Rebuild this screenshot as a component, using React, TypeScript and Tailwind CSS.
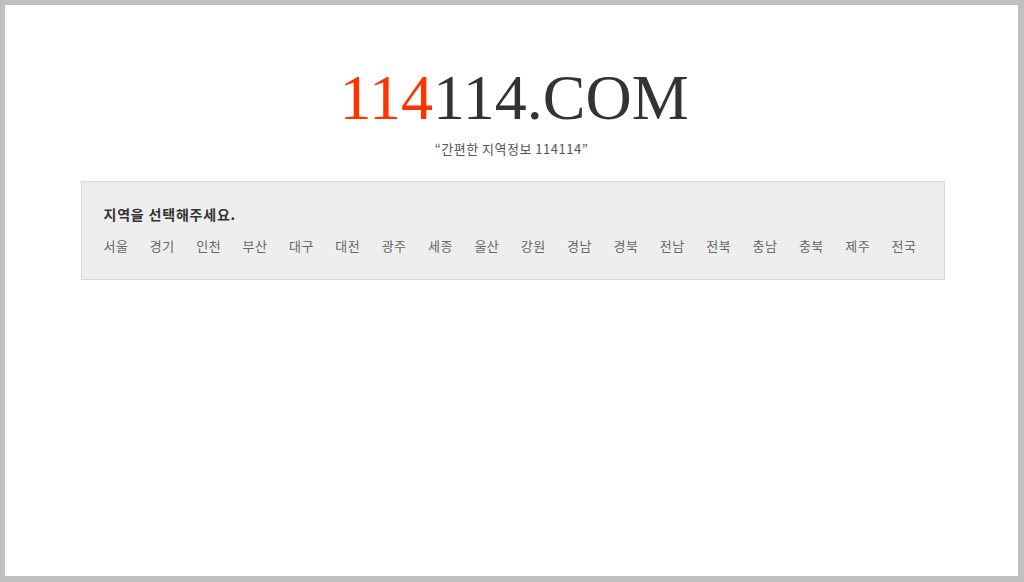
import React from "react";

const regions = ["서울","경기","인천","부산","대구","대전","광주","세종","울산","강원","경남","경북","전남","전북","충남","충북","제주","전국"];

export default function App() {
  return (
    <div className="h-[582px] w-[1024px] border-t-[5px] border-l-[5px] border-r-[6px] border-b-[6px] border-[#c0c0c0] bg-white overflow-hidden">
      <div className="flex flex-col items-center">
        <h1 className="mt-[61px] text-[64px] leading-[63px] font-normal ml-[5px]" style={{ fontFamily: '"Liberation Serif", "Times New Roman", serif' }}>
          <span className="text-[#ff3300]">114</span>
          <span className="text-[#333333]">114.COM</span>
        </h1>
        <p className="mt-[11px] text-[13px] leading-[18px] tracking-[0.5px] text-[#555555]" style={{ fontFamily: '"Noto Sans CJK KR", "Noto Sans", sans-serif' }}>
          “간편한 지역정보 114114”
        </p>
        <div className="mt-[23px] w-[864px] ml-[2px] border border-[#d8d8d8] bg-[#eeeeee] pl-[22px] pt-[23px] pb-[24px]" style={{ fontFamily: '"Noto Sans CJK KR", "Noto Sans", sans-serif' }}>
          <div className="text-[14px] leading-[18px] tracking-[0.8px] font-bold text-[#333333]">지역을 선택해주세요.</div>
          <ul className="mt-[14px] flex gap-[21.45px] text-[13px] leading-[18px] tracking-[0.5px] text-[#666666]">
            {regions.map((r) => (
              <li key={r}>
                <a href="#" className="text-[#666666]">{r}</a>
              </li>
            ))}
          </ul>
        </div>
      </div>
    </div>
  );
}
